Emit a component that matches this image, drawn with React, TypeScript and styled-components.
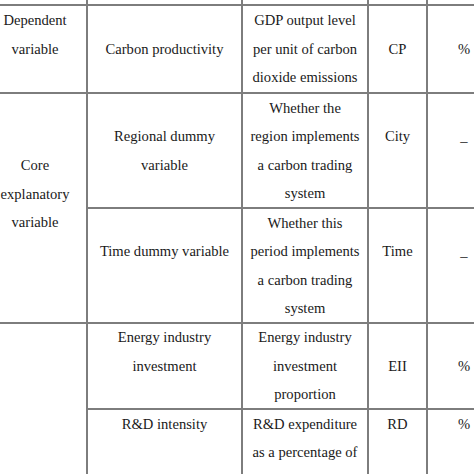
import styled, { createGlobalStyle } from 'styled-components';

const GlobalStyle = createGlobalStyle`
  html, body {
    margin: 0;
    padding: 0;
    background: #fff;
  }
  body {
    overflow: hidden;
  }
`;

const Viewport = styled.div`
  width: 474px;
  height: 474px;
  overflow: hidden;
  background: #fff;
`;

// the table is cropped: the header row and the left/right edges fall outside
const Table = styled.div`
  display: grid;
  grid-template-columns: 102px 153px 124px 57px 72px;
  grid-template-rows: 30px 86px 113px 113px 84px 90px;
  gap: 2px;
  width: max-content;
  margin: -26px 0 0 -16px;
  background: #7d7d7d;
  font-family: 'Liberation Serif', 'Times New Roman', Tinos, 'DejaVu Serif', serif;
  font-size: 14.6px;
  line-height: 28.4px;
  color: #1a1a1a;
`;

const Cell = styled.div<{ $span?: number; $top?: boolean }>`
  display: flex;
  flex-direction: column;
  align-items: center;
  justify-content: ${(p) => (p.$top ? 'flex-start' : 'center')};
  grid-row: ${(p) => (p.$span ? `span ${p.$span}` : 'auto')};
  background: #fff;
  text-align: center;
  white-space: nowrap;
  font-family: inherit;
`;

const Line = styled.span`
  display: block;
  min-height: 28.4px;
  font-family: 'Liberation Serif', 'DejaVu Serif', serif;
`;

type CellData = { lines: string[]; span?: number; top?: boolean };

const cells: CellData[] = [
  // header row (cut off above the view)
  { lines: [] },
  { lines: [] },
  { lines: [] },
  { lines: [] },
  { lines: [] },

  { lines: ['Dependent', 'variable', ''] },
  { lines: ['Carbon productivity'] },
  { lines: ['GDP output level', 'per unit of carbon', 'dioxide emissions'] },
  { lines: ['CP'] },
  { lines: ['%'] },

  { lines: ['Core', 'explanatory', 'variable', ''], span: 2 },
  { lines: ['Regional dummy', 'variable'] },
  { lines: ['Whether the', 'region implements', 'a carbon trading', 'system'] },
  { lines: ['City', ''] },
  { lines: ['_', ''] },

  { lines: ['Time dummy variable', ''] },
  { lines: ['Whether this', 'period implements', 'a carbon trading', 'system'] },
  { lines: ['Time', ''] },
  { lines: ['_', ''] },

  { lines: [], span: 2 },
  { lines: ['Energy industry', 'investment', ''] },
  { lines: ['Energy industry', 'investment', 'proportion'] },
  { lines: ['EII'] },
  { lines: ['%'] },

  { lines: ['R&D intensity'], top: true },
  { lines: ['R&D expenditure', 'as a percentage of'], top: true },
  { lines: ['RD'], top: true },
  { lines: ['%'], top: true },
];

export default function App() {
  return (
    <Viewport>
      <GlobalStyle />
      <Table>
        {cells.map((c, i) => (
          <Cell key={i} $span={c.span} $top={c.top}>
            {c.lines.map((l, j) => (
              <Line key={j}>{l || '\u00a0'}</Line>
            ))}
          </Cell>
        ))}
      </Table>
    </Viewport>
  );
}
